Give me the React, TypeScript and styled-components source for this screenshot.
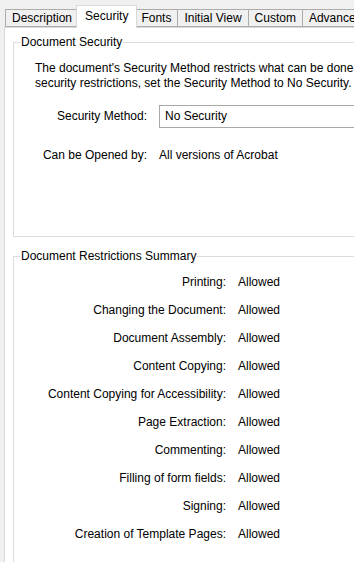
import React from 'react';
import styled, {createGlobalStyle} from 'styled-components';

const GlobalStyle = createGlobalStyle`
  html, body {
    margin: 0;
    padding: 0;
    background: #f0f0f0;
    overflow: hidden;
  }
  body {
    font-family: "Liberation Sans", Arial, sans-serif;
    font-size: 12px;
    color: #000;
  }
`

const tabs = ['Description', 'Security', 'Fonts', 'Initial View', 'Custom', 'Advanced']

const restrictions = [
    'Printing',
    'Changing the Document',
    'Document Assembly',
    'Content Copying',
    'Content Copying for Accessibility',
    'Page Extraction',
    'Commenting',
    'Filling of form fields',
    'Signing',
    'Creation of Template Pages',
]

export default function App() {
    return (
        <>
            <GlobalStyle/>
            <Dialog>
                <TabStrip>
                    {tabs.map(t => (
                        <Tab key={t} active={t === 'Security'}>{t}</Tab>
                    ))}
                </TabStrip>
                <Panel>
                    <GroupBox>
                        <Legend>Document Security</Legend>
                        <Intro>
                            The document's Security Method restricts what can be done to the document. To remove<br/>
                            security restrictions, set the Security Method to No Security.
                        </Intro>
                        <FieldGrid>
                            <Label>Security Method:</Label>
                            <SelectBox>No Security</SelectBox>
                            <Label>Can be Opened by:</Label>
                            <Value>All versions of Acrobat</Value>
                        </FieldGrid>
                    </GroupBox>
                    <GroupBox last>
                        <Legend>Document Restrictions Summary</Legend>
                        <SummaryGrid>
                            {restrictions.map(r => (
                                <React.Fragment key={r}>
                                    <Label>{r}:</Label>
                                    <Value>Allowed</Value>
                                </React.Fragment>
                            ))}
                        </SummaryGrid>
                    </GroupBox>
                </Panel>
            </Dialog>
        </>
    )
}

const Dialog = styled.div`
  width: 470px;
  height: 562px;
  overflow: hidden;
  background: #f0f0f0;
`
const TabStrip = styled.div`
  display: flex;
  align-items: flex-end;
  height: 27px;
  padding-left: 5px;
`
const Tab = styled.div<{active?: boolean}>`
  position: relative;
  display: flex;
  align-items: center;
  box-sizing: border-box;
  white-space: nowrap;
  height: ${props => props.active ? '23px' : '18px'};
  padding: ${props => props.active ? '0 8px 2px' : '0 6px'};
  margin-left: ${props => props.active ? '-3px' : '-1px'};
  margin-right: ${props => props.active ? '-2px' : '0'};
  margin-bottom: ${props => props.active ? '-1px' : '0'};
  border: 1px solid ${props => props.active ? '#d9d9d9' : '#acacac'};
  border-bottom: ${props => props.active ? 'none' : '1px solid #acacac'};
  background: ${props => props.active ? '#fff' : '#f0f0f0'};
  z-index: ${props => props.active ? 2 : 1};

  &:first-child {
    margin-left: 0;
  }
`
const Panel = styled.div`
  position: relative;
  z-index: 1;
  margin-left: 4px;
  height: 535px;
  border-left: 1px solid #d9d9d9;
  border-top: 1px solid #d9d9d9;
  background: #fff;
  padding: 7px 0 0 8px;
`
const GroupBox = styled.fieldset<{last?: boolean}>`
  margin: ${props => props.last ? '12px 0 0' : '0'};
  padding: ${props => props.last ? '0 0 60px 6px' : '0 0 73px 6px'};
  border: 1px solid #dcdcdc;
  border-right: none;
  min-width: 0;
`
const Legend = styled.legend`
  padding: 0 1px;
  line-height: 15px;
`
const Intro = styled.p`
  margin: 11px 0 0 15px;
  line-height: 15px;
  white-space: nowrap;
`
const FieldGrid = styled.div`
  display: grid;
  grid-template-columns: 112px 1fr;
  column-gap: 12px;
  row-gap: 20px;
  align-items: center;
  margin: 14px 0 0 15px;
  line-height: 15px;
`
const SummaryGrid = styled.div`
  display: grid;
  grid-template-columns: 206px auto;
  column-gap: 12px;
  grid-auto-rows: 28px;
  align-items: center;
  margin-top: 4px;
  line-height: 15px;
`
const Label = styled.div`
  text-align: right;
  white-space: nowrap;
`
const Value = styled.div`
  white-space: nowrap;
`
const SelectBox = styled.div`
  box-sizing: border-box;
  height: 23px;
  display: flex;
  align-items: center;
  padding-left: 5px;
  border: 1px solid #a8a8a8;
  background: #fff;
`
